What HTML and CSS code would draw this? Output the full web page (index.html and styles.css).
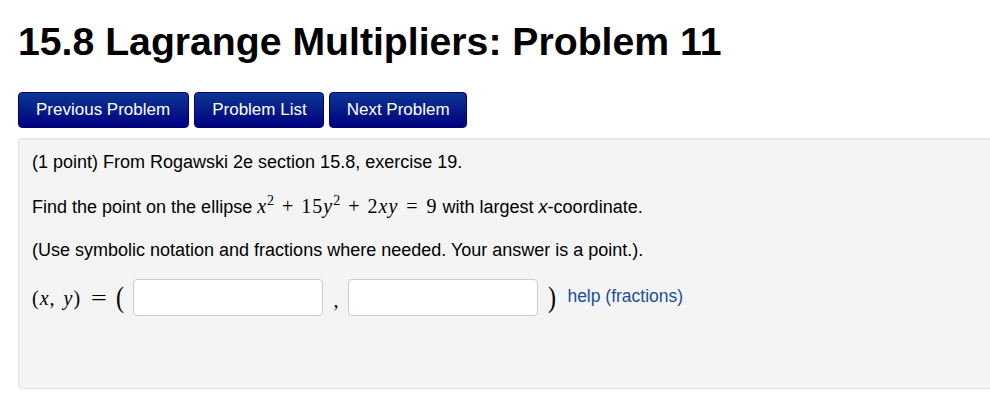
FILE: index.html
```html
<!DOCTYPE html>
<html>
<head>
<meta charset="utf-8">
<link rel="stylesheet" href="styles.css">
</head>
<body>
<div class="page">
  <h1 class="title">15.8 Lagrange Multipliers: Problem 11</h1>
  <div class="nav">
    <a class="btn">Previous Problem</a>
    <a class="btn">Problem List</a>
    <a class="btn">Next Problem</a>
  </div>
  <div class="well">
    <p class="para">(1 point) From Rogawski 2e section 15.8, exercise 19.</p>
    <p class="para">Find the point on the ellipse <span class="math eq"><i>x</i><sup>2</sup><span class="op">+</span>15<i>y</i><sup>2</sup><span class="op">+</span>2<i>x</i><i>y</i><span class="rel">=</span>9</span> with largest <i class="itxt">x</i>-coordinate.</p>
    <p class="para">(Use symbolic notation and fractions where needed. Your answer is a point.).</p>
    <div class="answer">
      <span class="math">(<i>x</i>,<span class="thin"></span><i>y</i>)<span class="rel2">=</span></span>
      <span class="bigparen open">(</span>
      <input class="box" type="text">
      <span class="comma">,</span>
      <input class="box" type="text">
      <span class="bigparen close">)</span>
      <a class="help">help (fractions)</a>
    </div>
  </div>
</div>
</body>
</html>
```

FILE: styles.css
```css
html, body {
  margin: 0;
  padding: 0;
  background: #fff;
  overflow: hidden;
}
body {
  font-family: "Liberation Sans", Arial, sans-serif;
  color: #000;
}
.page {
  padding-left: 18px;
}
.title {
  margin: 20px 0 0 0;
  font-size: 39.2px;
  line-height: 44px;
  font-weight: bold;
}
.nav {
  display: flex;
  gap: 5px;
  margin-top: 28px;
}
.btn {
  display: flex;
  align-items: center;
  height: 36px;
  box-sizing: border-box;
  padding: 0 16px 1px 17px;
  font-size: 17px;
  color: #fff;
  background: linear-gradient(to bottom, #0c3792, #00007f);
  border: 1px solid #000070;
  border-radius: 4px;
}
.btn:first-child {
  padding-right: 18px;
}
.well {
  margin-top: 10px;
  width: 1000px;
  height: 251px;
  box-sizing: border-box;
  padding: 11px 13px;
  background: #f4f4f4;
  border: 1px solid #e3e3e3;
  border-radius: 4px;
  box-shadow: inset 0 1px 1px rgba(0,0,0,0.04);
}
.para {
  margin: 0 0 20px 0;
  font-size: 18px;
  line-height: 24px;
  height: 24px;
}
.math {
  font-family: "Liberation Serif", "Times New Roman", serif;
  font-size: 20px;
  letter-spacing: 1px;
}
.eq {
  margin-left: 0;
  margin-right: 0;
}
.math i {
  font-style: italic;
}
.math sup {
  font-size: 14px;
  vertical-align: 8px;
  line-height: 0;
  font-style: normal;
}
.op {
  margin: 0 7px;
}
.rel {
  margin: 0 8px;
}
.rel2 {
  display: inline-block;
  margin-left: 10px;
  transform: scaleX(1.4);
  transform-origin: left center;
}
.thin {
  display: inline-block;
  width: 8px;
}
.itxt {
  font-style: italic;
}
.answer {
  display: flex;
  align-items: center;
  height: 38px;
  margin-top: -4px;
}
.answer .math {
  margin-top: 2px;
}
.bigparen {
  font-family: "Liberation Serif", "Times New Roman", serif;
  font-size: 30px;
  line-height: 30px;
  transform: scaleX(0.8);
}
.open {
  margin: 0 8px 0 12px;
}
.close {
  margin: 0 10px 0 9px;
}
.box {
  width: 190px;
  height: 37px;
  box-sizing: border-box;
  border: 1px solid #cccccc;
  border-radius: 4px;
  background: #fff;
  margin: 0;
  padding: 4px 6px;
}
.comma {
  font-family: "Liberation Serif", "Times New Roman", serif;
  font-size: 20px;
  margin: 6px 10px 0 10px;
}
.help {
  font-size: 17.5px;
  color: #1a4e9d;
  margin-top: -2px;
}
```
